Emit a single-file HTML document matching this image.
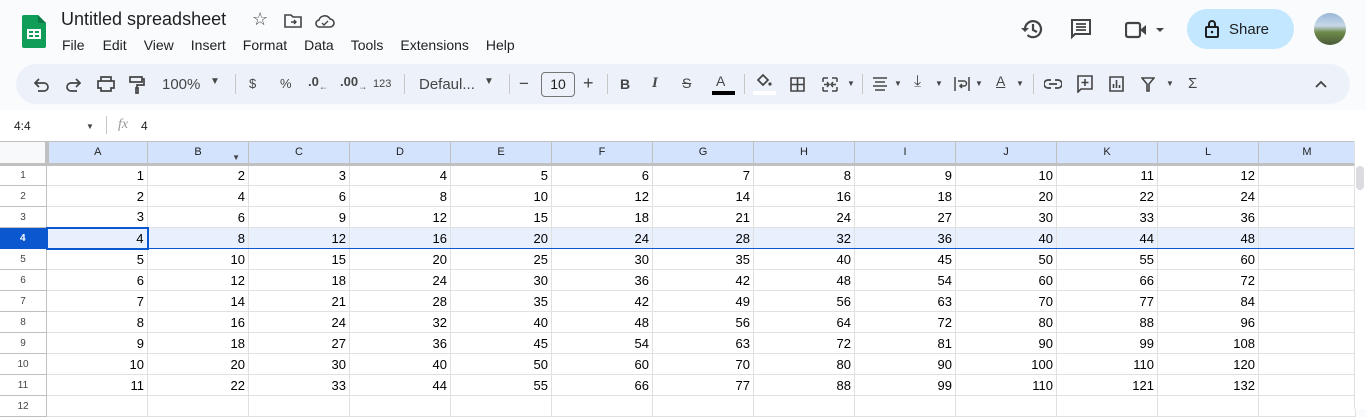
<!DOCTYPE html>
<html><head><meta charset="utf-8"><style>
*{box-sizing:border-box;margin:0;padding:0}
body{width:1366px;height:409px;overflow:hidden;background:#f9fbfd;font-family:"Liberation Sans",Arial,sans-serif;position:relative;color:#1f1f1f}
.a{position:absolute}
.menu span{margin-right:17px}
.tb{position:absolute;top:64px;left:16px;width:1334px;height:40px;background:#edf2fa;border-radius:20px}
.ic{position:absolute;top:75px;font-size:14px;color:#444746}
.sep{position:absolute;top:74px;width:1px;height:20px;background:#c7c7c7}
table{position:absolute;top:141px;left:-1px;border-collapse:collapse;table-layout:fixed;background:#fff}
td{height:21px;border:1px solid #e1e1e1;font-size:13px;text-align:right;padding:0 3px 0 0;color:#000;line-height:19px;white-space:nowrap;overflow:hidden}
td.h{text-align:center;font-size:10px;color:#444;padding:0;background:#fff;border-color:#c0c0c0}
tr.hd td{height:23px;background:#d3e3fd;text-align:center;font-size:11px;color:#1f1f1f;padding:0;border-color:#c0c0c0;border-bottom:3px solid #c0c0c0}
tr.sel td{background:#e8f0fe;border-top:1px solid #0b57d0;border-bottom:1px solid #0b57d0}
tr.sel td.h{background:#0b57d0;color:#fff;font-weight:bold}
</style></head><body>
<svg class="a" style="left:22px;top:15px" width="24" height="33" viewBox="0 0 24 33"><path d="M2 0h14l8 8v23a2 2 0 0 1-2 2H2a2 2 0 0 1-2-2V2a2 2 0 0 1 2-2z" fill="#0f9d58"/><path d="M16 0l8 8h-6a2 2 0 0 1-2-2z" fill="#0b7a45"/><rect x="5" y="14" width="14" height="10" fill="#fff"/><rect x="7" y="16" width="4" height="2" fill="#0f9d58"/><rect x="13" y="16" width="4" height="2" fill="#0f9d58"/><rect x="7" y="20" width="4" height="2" fill="#0f9d58"/><rect x="13" y="20" width="4" height="2" fill="#0f9d58"/></svg>
<div class="a" style="left:61px;top:9px;font-size:18px;color:#1f1f1f">Untitled spreadsheet</div>
<div class="a" style="left:252px;top:9px;font-size:18px;color:#444">☆</div>
<svg class="a" style="left:284px;top:14px" width="18" height="14" viewBox="0 0 18 14"><path d="M1 1h6l2 2h8v10H1z" fill="none" stroke="#444" stroke-width="1.6"/><path d="M7 8h5M10 6l2 2-2 2" stroke="#444" stroke-width="1.4" fill="none"/></svg>
<svg class="a" style="left:315px;top:14px" width="20" height="14" viewBox="0 0 20 14"><path d="M5 13h10a4 4 0 0 0 0-8 6 6 0 0 0-11 1 3.5 3.5 0 0 0 1 7z" fill="none" stroke="#444" stroke-width="1.6"/><path d="M7 9l2 2 4-4" stroke="#444" stroke-width="1.4" fill="none"/></svg>
<div class="a menu" style="left:62px;top:37px;font-size:14px;color:#1f1f1f"><span style="margin-right:18px">File</span><span>Edit</span><span>View</span><span>Insert</span><span>Format</span><span>Data</span><span>Tools</span><span>Extensions</span><span>Help</span></div>
<svg class="a" style="left:1020px;top:18px" width="24" height="22" viewBox="0 0 24 22"><path d="M5 11a8 8 0 1 1 2.5 6" fill="none" stroke="#444" stroke-width="2.2"/><path d="M1 10l4 4 4-4" fill="#444"/><path d="M13 6v6l4 2" stroke="#444" stroke-width="2.2" fill="none"/></svg>
<svg class="a" style="left:1070px;top:18px" width="22" height="22" viewBox="0 0 22 22"><path d="M2 2h18v14H5l-3 3z" fill="none" stroke="#444" stroke-width="2"/><path d="M6 6h10M6 9h10M6 12h10" stroke="#444" stroke-width="1.8"/></svg>
<svg class="a" style="left:1125px;top:21px" width="40" height="18" viewBox="0 0 40 18"><rect x="1" y="2" width="14" height="14" rx="2" fill="none" stroke="#444" stroke-width="2.2"/><path d="M15 9l6-5v10z" fill="#444"/><path d="M31 7h8l-4 4z" fill="#444"/></svg>
<div class="a" style="left:1187px;top:9px;width:107px;height:40px;border-radius:20px;background:#c2e7ff"></div>
<svg class="a" style="left:1205px;top:20px" width="14" height="18" viewBox="0 0 14 18"><rect x="1" y="7" width="12" height="10" rx="1" fill="none" stroke="#1f1f1f" stroke-width="2"/><path d="M4 7V4a3 3 0 0 1 6 0v3" fill="none" stroke="#1f1f1f" stroke-width="2"/><circle cx="7" cy="12" r="1.3" fill="#1f1f1f"/></svg>
<div class="a" style="left:1229px;top:21px;font-size:15px;color:#1f1f1f">Share</div>
<div class="a" style="left:1314px;top:13px;width:32px;height:32px;border-radius:50%;background:linear-gradient(#9ab8d8 0%,#c8d8e8 40%,#6d8a4a 60%,#4a5a3a 100%)"></div>
<div class="tb"></div>
<svg class="a" style="left:34px;top:78px" width="16" height="14" viewBox="0 0 16 14"><path d="M5 1L1 5l4 4M1 5h9a4 4 0 0 1 0 8H4" fill="none" stroke="#444" stroke-width="1.7"/></svg>
<svg class="a" style="left:65px;top:78px" width="16" height="14" viewBox="0 0 16 14"><path d="M11 1l4 4-4 4M15 5H6a4 4 0 0 0 0 8h6" fill="none" stroke="#444" stroke-width="1.7"/></svg>
<svg class="a" style="left:97px;top:76px" width="18" height="16" viewBox="0 0 18 16"><path d="M4 1h10v4H4zM1 5h16v7h-3v3H4v-3H1z" fill="none" stroke="#444" stroke-width="1.7"/></svg>
<svg class="a" style="left:129px;top:76px" width="16" height="18" viewBox="0 0 16 18"><path d="M1 1h12v5H1zM13 3h2v6H8v3M7 12h2v5H7z" fill="none" stroke="#444" stroke-width="1.7"/></svg>
<div class="ic" style="left:162px;top:76px;font-size:15px">100%</div>
<div class="ic" style="left:210px;top:76px;font-size:10px">▼</div>
<div class="sep" style="left:235px"></div>
<div class="ic" style="left:249px;top:76px;font-size:13px">$</div>
<div class="ic" style="left:280px;top:76px;font-size:13px">%</div>
<div class="ic" style="left:308px;top:74px;font-size:13px;font-weight:bold">.0<sub style="font-size:9px">←</sub></div>
<div class="ic" style="left:340px;top:74px;font-size:13px;font-weight:bold">.00<sub style="font-size:9px">→</sub></div>
<div class="ic" style="left:373px;top:78px;font-size:11px">123</div>
<div class="sep" style="left:404px"></div>
<div class="ic" style="left:419px;top:76px;font-size:15px">Defaul...</div>
<div class="ic" style="left:484px;top:76px;font-size:10px">▼</div>
<div class="sep" style="left:509px"></div>
<div class="ic" style="left:519px;top:74px;font-size:17px">−</div>
<div class="a" style="left:541px;top:72px;width:34px;height:25px;border:1px solid #747775;border-radius:4px;font-size:14px;text-align:center;line-height:23px;color:#1f1f1f">10</div>
<div class="ic" style="left:583px;top:73px;font-size:18px">+</div>
<div class="sep" style="left:607px"></div>
<div class="ic" style="left:620px;top:76px;font-size:14px;font-weight:bold">B</div>
<div class="ic" style="left:652px;top:75px;font-size:15px;font-style:italic;font-family:'Liberation Serif',serif;font-weight:bold">I</div>
<div class="ic" style="left:682px;top:75px;font-size:14px;text-decoration:line-through">S</div>
<div class="ic" style="left:716px;top:73px;font-size:14px">A</div>
<div class="a" style="left:712px;top:91px;width:23px;height:4px;background:#000"></div>
<div class="sep" style="left:744px"></div>
<svg class="a" style="left:755px;top:74px" width="18" height="14" viewBox="0 0 18 14"><path d="M3 6l5-5 5 5-5 5z" fill="none" stroke="#444" stroke-width="1.7"/><circle cx="15" cy="10" r="1.6" fill="#444"/></svg>
<div class="a" style="left:753px;top:91px;width:23px;height:4px;background:#fff"></div>
<svg class="a" style="left:790px;top:77px" width="15" height="15" viewBox="0 0 15 15"><path d="M1 1h13v13H1zM7.5 1v13M1 7.5h13" fill="none" stroke="#444" stroke-width="1.6"/></svg>
<svg class="a" style="left:822px;top:77px" width="16" height="15" viewBox="0 0 16 15"><path d="M1 1h5M10 1h5M1 14h5M10 14h5M1 1v4M15 1v4M1 10v4M15 10v4M2 7.5h4M10 7.5h4M5 5l2 2.5L5 10M11 5l-2 2.5 2 2.5" fill="none" stroke="#444" stroke-width="1.5"/></svg>
<div class="ic" style="left:847px;top:79px;font-size:8px">▼</div>
<div class="sep" style="left:862px"></div>
<svg class="a" style="left:872px;top:77px" width="16" height="14" viewBox="0 0 16 14"><path d="M1 1h14M3 5h10M1 9h14M3 13h10" stroke="#444" stroke-width="1.6"/></svg>
<div class="ic" style="left:894px;top:79px;font-size:8px">▼</div>
<div class="ic" style="left:914px;top:73px;font-size:16px">⤓</div>
<div class="ic" style="left:935px;top:79px;font-size:8px">▼</div>
<svg class="a" style="left:954px;top:77px" width="16" height="14" viewBox="0 0 16 14"><path d="M1 0v14M15 0v14M4 4h6a2.5 2.5 0 0 1 0 5H6M8 7l-2 2 2 2" fill="none" stroke="#444" stroke-width="1.5"/></svg>
<div class="ic" style="left:975px;top:79px;font-size:8px">▼</div>
<div class="ic" style="left:996px;top:73px;font-size:14px;text-decoration:underline">A</div>
<div class="ic" style="left:1016px;top:79px;font-size:8px">▼</div>
<div class="sep" style="left:1033px"></div>
<svg class="a" style="left:1044px;top:79px" width="18" height="10" viewBox="0 0 18 10"><path d="M7 1H4a4 4 0 0 0 0 8h3M11 1h3a4 4 0 0 1 0 8h-3M5 5h8" fill="none" stroke="#444" stroke-width="1.7"/></svg>
<svg class="a" style="left:1077px;top:75px" width="16" height="18" viewBox="0 0 16 18"><path d="M1 1h14v13H4l-3 3z" fill="none" stroke="#444" stroke-width="1.6"/><path d="M8 4v7M4.5 7.5h7" stroke="#444" stroke-width="1.6"/></svg>
<svg class="a" style="left:1109px;top:76px" width="15" height="16" viewBox="0 0 15 16"><path d="M1 1h13v14H1z" fill="none" stroke="#444" stroke-width="1.6"/><path d="M4.5 12V8M7.5 12V4M10.5 12V9" stroke="#444" stroke-width="1.6"/></svg>
<svg class="a" style="left:1141px;top:77px" width="14" height="15" viewBox="0 0 14 15"><path d="M1 1h12L8 7v7H6V7z" fill="none" stroke="#444" stroke-width="1.6"/></svg>
<div class="ic" style="left:1166px;top:79px;font-size:8px">▼</div>
<div class="ic" style="left:1188px;top:75px;font-size:15px">Σ</div>
<svg class="a" style="left:1315px;top:80px" width="12" height="8" viewBox="0 0 12 8"><path d="M1 7l5-5 5 5" fill="none" stroke="#444" stroke-width="1.8"/></svg>
<div class="a" style="left:0;top:110px;width:1366px;height:31px;background:#fff"></div>
<div class="a" style="left:14px;top:119px;font-size:12px;color:#1f1f1f">4:4</div>
<div class="a" style="left:86px;top:122px;font-size:8px;color:#444">▼</div>
<div class="a" style="left:106px;top:116px;width:1px;height:18px;background:#c7c7c7"></div>
<div class="a" style="left:118px;top:117px;font-size:14px;color:#999;font-style:italic;font-family:'Liberation Serif',serif">fx</div>
<div class="a" style="left:141px;top:119px;font-size:12px;color:#1f1f1f">4</div>
<table>
<colgroup><col style="width:47px"><col style="width:101px"><col style="width:101px"><col style="width:101px"><col style="width:101px"><col style="width:101px"><col style="width:101px"><col style="width:101px"><col style="width:101px"><col style="width:101px"><col style="width:101px"><col style="width:101px"><col style="width:101px"><col style="width:97px"></colgroup>
<tr class="hd"><td style="background:#f8f9fa;border-right:4px solid #c0c0c0"></td><td>A</td><td style="position:relative">B<span style="position:absolute;right:8px;top:6px;font-size:8px;color:#444">▼</span></td><td>C</td><td>D</td><td>E</td><td>F</td><td>G</td><td>H</td><td>I</td><td>J</td><td>K</td><td>L</td><td>M</td></tr>
<tr><td class="h">1</td><td>1</td><td>2</td><td>3</td><td>4</td><td>5</td><td>6</td><td>7</td><td>8</td><td>9</td><td>10</td><td>11</td><td>12</td><td></td></tr>
<tr><td class="h">2</td><td>2</td><td>4</td><td>6</td><td>8</td><td>10</td><td>12</td><td>14</td><td>16</td><td>18</td><td>20</td><td>22</td><td>24</td><td></td></tr>
<tr><td class="h">3</td><td>3</td><td>6</td><td>9</td><td>12</td><td>15</td><td>18</td><td>21</td><td>24</td><td>27</td><td>30</td><td>33</td><td>36</td><td></td></tr>
<tr class="sel"><td class="h">4</td><td style="border:2px solid #0b57d0">4</td><td>8</td><td>12</td><td>16</td><td>20</td><td>24</td><td>28</td><td>32</td><td>36</td><td>40</td><td>44</td><td>48</td><td></td></tr>
<tr><td class="h">5</td><td>5</td><td>10</td><td>15</td><td>20</td><td>25</td><td>30</td><td>35</td><td>40</td><td>45</td><td>50</td><td>55</td><td>60</td><td></td></tr>
<tr><td class="h">6</td><td>6</td><td>12</td><td>18</td><td>24</td><td>30</td><td>36</td><td>42</td><td>48</td><td>54</td><td>60</td><td>66</td><td>72</td><td></td></tr>
<tr><td class="h">7</td><td>7</td><td>14</td><td>21</td><td>28</td><td>35</td><td>42</td><td>49</td><td>56</td><td>63</td><td>70</td><td>77</td><td>84</td><td></td></tr>
<tr><td class="h">8</td><td>8</td><td>16</td><td>24</td><td>32</td><td>40</td><td>48</td><td>56</td><td>64</td><td>72</td><td>80</td><td>88</td><td>96</td><td></td></tr>
<tr><td class="h">9</td><td>9</td><td>18</td><td>27</td><td>36</td><td>45</td><td>54</td><td>63</td><td>72</td><td>81</td><td>90</td><td>99</td><td>108</td><td></td></tr>
<tr><td class="h">10</td><td>10</td><td>20</td><td>30</td><td>40</td><td>50</td><td>60</td><td>70</td><td>80</td><td>90</td><td>100</td><td>110</td><td>120</td><td></td></tr>
<tr><td class="h">11</td><td>11</td><td>22</td><td>33</td><td>44</td><td>55</td><td>66</td><td>77</td><td>88</td><td>99</td><td>110</td><td>121</td><td>132</td><td></td></tr>
<tr><td class="h">12</td><td></td><td></td><td></td><td></td><td></td><td></td><td></td><td></td><td></td><td></td><td></td><td></td><td></td></tr>
</table>
<div class="a" style="left:1354px;top:141px;width:12px;height:268px;background:#fff;border-left:1px solid #e1e1e1"></div>
<div class="a" style="left:1356px;top:166px;width:8px;height:24px;border-radius:4px;background:#dadce0"></div>
</body></html>
